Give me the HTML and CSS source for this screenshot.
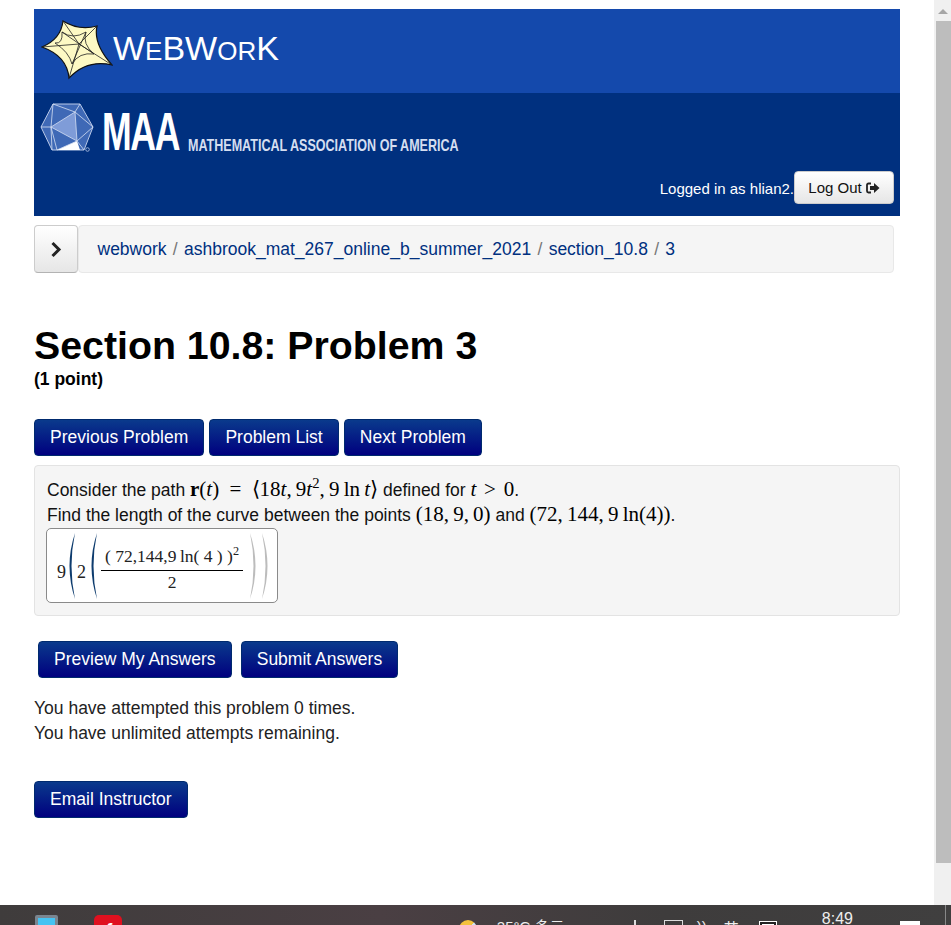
FILE: index.html
```html
<!DOCTYPE html>
<html lang="en">
<head>
    <meta charset="UTF-8">
    <title>Section 10.8: Problem 3</title>
    <link rel="stylesheet" href="styles.css">
</head>
<body>
    <div class="window">
        <div class="page">
            <!-- Banner -->
            <div class="brand-bar">
                <svg class="web-logo" width="72" height="60" viewBox="0 0 72 60">
                    <path d="M22 1 Q38 11 56 6 Q52 24 71 45 Q46 39 28 58 Q26 36 1 27 Q20 19 22 1Z" fill="#fdf9c4" stroke="#111" stroke-width="1.2"/>
                    <path d="M22 1 L38 24 L56 6 M1 27 L38 24 L71 45 M28 58 L38 24 M14 23 Q22 24 21 12 Q32 20 45 12 Q41 24 53 34 Q38 32 31 44 Q28 32 14 23Z M21 12 L53 34 M45 12 L31 44" fill="none" stroke="#222" stroke-width="0.8"/>
                </svg>
                <span class="web-title">W<small>E</small>BW<small>O</small><small>R</small>K</span>
            </div>
            <div class="maa-bar">
                <div class="maa-logo">
                    <svg width="54" height="50" viewBox="0 0 54 50">
                        <path d="M13 1 L40 1 L53 24 L44 47 L12 47 L1 24Z" fill="#3f69b6" stroke="#b9c9e8" stroke-width="1"/>
                        <path d="M11 24 L35 9 L37 38 L11 24Z" fill="#7f9cd8"/>
                        <path d="M17 47 L37 38 L40 47Z" fill="#fff"/>
                        <path d="M13 1 L35 9 L40 1 M35 9 L53 24 L37 38 L44 47 M1 24 L11 24 L13 1 M11 24 L12 47 M11 24 L37 38 L17 47 L11 24 M35 9 L11 24 M35 9 L37 38" fill="none" stroke="#d5dff3" stroke-width="0.8"/>
                        <circle cx="47.500" cy="46.500" r="1.800" fill="none" stroke="#c9d6ef" stroke-width="0.700"/>
                    </svg>
                    <span class="maa-big">MAA</span>
                    <span class="maa-name">MATHEMATICAL ASSOCIATION OF AMERICA</span>
                </div>
                <div class="login-row">
                    <span class="login-text">Logged in as hlian2.</span>
                    <a class="logout-btn">Log Out
                        <svg width="14" height="12" viewBox="0 0 14 12"><path d="M5 1.500H2.500A1.500 1.500 0 0 0 1 3V9A1.500 1.500 0 0 0 2.500 10.500H5" fill="none" stroke="#222" stroke-width="1.800"/><path d="M4 4H8V1L13.500 6L8 11V8H4Z" fill="#222"/></svg>
                    </a>
                </div>
            </div>

            <!-- Breadcrumb -->
            <div class="nav-row">
                <a class="toggle-btn">
                    <svg width="12" height="17" viewBox="0 0 12 17"><path d="M2.500 2L9 8.500L2.500 15" fill="none" stroke="#222" stroke-width="3"/></svg>
                </a>
                <div class="breadcrumb">
                    <a>webwork</a><span class="sep">/</span><a>ashbrook_mat_267_online_b_summer_2021</a><span class="sep">/</span><a>section_10.8</a><span class="sep">/</span><a>3</a>
                </div>
            </div>

            <h1>Section 10.8: Problem 3</h1>
            <div class="points">(1 point)</div>

            <div class="btn-row">
                <a class="blue-btn">Previous Problem</a>
                <a class="blue-btn">Problem List</a>
                <a class="blue-btn">Next Problem</a>
            </div>

            <!-- Problem -->
            <div class="problem">
                <div class="line">Consider the path <span class="math eq"><b>r</b>(<i>t</i>) = ⟨18<i>t</i>,&thinsp;9<i>t</i><sup>2</sup>,&thinsp;9&thinsp;ln&thinsp;<i>t</i>⟩</span> defined for <span class="math gt"><i>t</i> &gt; 0</span>.</div>
                <div class="line">Find the length of the curve between the points <span class="math">(18,&thinsp;9,&thinsp;0)</span> and <span class="math">(72,&thinsp;144,&thinsp;9&thinsp;ln(4))</span>.</div>
                <div class="answer">
                    <span class="ans-num">9</span>
                    <svg class="paren" width="9" height="66" viewBox="0 0 9 66"><path d="M8 0 Q-3 33 8 66 Q1 33 8 0Z"/></svg>
                    <span class="ans-num two">2</span>
                    <svg class="paren" width="9" height="66" viewBox="0 0 9 66"><path d="M8 0 Q-3 33 8 66 Q1 33 8 0Z"/></svg>
                    <span class="frac">
                        <span class="numer">( 72,144,9&thinsp;ln( 4 ) )<sup>2</sup></span>
                        <span class="denom">2</span>
                    </span>
                    <svg class="paren ghost" width="9" height="66" viewBox="0 0 9 66"><path d="M1 0 Q12 33 1 66 Q8 33 1 0Z"/></svg>
                    <svg class="paren ghost" width="9" height="66" viewBox="0 0 9 66"><path d="M1 0 Q12 33 1 66 Q8 33 1 0Z"/></svg>
                </div>
            </div>

            <div class="btn-row submit-row">
                <a class="blue-btn">Preview My Answers</a>
                <a class="blue-btn">Submit Answers</a>
            </div>

            <div class="attempts">
                <div>You have attempted this problem 0 times.</div>
                <div>You have unlimited attempts remaining.</div>
            </div>

            <div class="email-row">
                <a class="blue-btn">Email Instructor</a>
            </div>
        </div>

        <!-- Browser scrollbar -->
        <div class="scrollbar">
            <div class="scroll-arrow"></div>
            <div class="scroll-thumb"></div>
        </div>
    </div>

    <!-- Windows taskbar, cut off by the bottom of the picture -->
    <div class="taskbar">
        <div class="task-left">
            <span class="task-monitor"></span>
            <span class="task-flash">f</span>
        </div>
        <div class="task-right">
            <span class="task-weather"></span>
            <span class="task-text">25°C 多云</span>
            <span class="task-tick"></span>
            <span class="task-box"></span>
            <span class="task-glyph">))</span>
            <span class="task-glyph wide">艹</span>
            <span class="task-box ime"></span>
            <span class="task-clock">8:49</span>
            <span class="task-note"></span>
            <span class="task-edge"></span>
        </div>
    </div>
</body>
</html>
```

FILE: styles.css
```css
html, body {
    margin: 0;
    padding: 0;
    height: 925px;
    overflow: hidden;
    background: #fff;
    font-family: "Liberation Sans", Arial, sans-serif;
    font-size: 17.500px;
    color: #111;
}
.window {
    display: flex;
    height: 905px;
}
.page {
    width: 866px;
    margin-left: 34px;
    padding-top: 9px;
}

/* Banner */
.brand-bar {
    height: 84px;
    background: #1449ac;
    display: flex;
    align-items: flex-start;
    box-sizing: border-box;
    padding: 11px 0 0 7px;
}
.web-title {
    color: #fff;
    font-size: 34px;
    line-height: 34px;
    margin: 11px 0 0 0;
}
.web-title small {
    font-size: 26px;
}
.maa-bar {
    height: 123px;
    background: #00307f;
    display: flex;
    flex-direction: column;
    justify-content: space-between;
}
.maa-logo {
    display: flex;
    align-items: flex-end;
    padding: 10px 0 0 6px;
    color: #fff;
}
.maa-big {
    font-weight: bold;
    font-size: 54px;
    line-height: 43px;
    letter-spacing: -2px;
    margin-left: 8px;
    transform: scaleX(0.66);
    transform-origin: left;
    width: 86px;
}
.maa-name {
    font-weight: bold;
    font-size: 17px;
    line-height: 17px;
    color: #d5def0;
    transform: scaleX(0.738);
    transform-origin: left;
    white-space: nowrap;
    width: 271px;
    margin-bottom: -1px;
}
.login-row {
    display: flex;
    justify-content: flex-end;
    align-items: center;
    padding: 0 6px 12px 0;
}
.login-text {
    color: #fff;
    font-size: 15px;
    margin-top: 1px;
}
.logout-btn {
    display: flex;
    align-items: center;
    gap: 4px;
    width: 100px;
    height: 33px;
    box-sizing: border-box;
    justify-content: center;
    background: linear-gradient(#fff, #e6e6e6);
    border: 1px solid #ccc;
    border-radius: 4px;
    font-size: 15px;
    color: #111;
}

/* Breadcrumb */
.nav-row {
    display: flex;
    margin-top: 9px;
    width: 860px;
}
.toggle-btn {
    width: 44px;
    height: 48px;
    box-sizing: border-box;
    display: flex;
    align-items: center;
    justify-content: center;
    background: linear-gradient(#fff, #e6e6e6);
    border: 1px solid #ccc;
    border-bottom-color: #b3b3b3;
    border-radius: 4px;
}
.breadcrumb {
    flex: 1;
    height: 48px;
    box-sizing: border-box;
    padding-left: 18.500px;
    display: flex;
    align-items: center;
    background: #f5f5f5;
    border: 1px solid #e8e8e8;
    border-radius: 4px;
    color: #00307f;
}
.breadcrumb .sep {
    color: #777;
    margin: 0 6.250px;
}

h1 {
    margin: 49px 0 0;
    font-size: 39.300px;
    line-height: 46px;
    color: #000;
}
.points {
    font-weight: bold;
    font-size: 17.500px;
    line-height: 18px;
    color: #000;
    margin-top: 2px;
}

/* Buttons */
.btn-row {
    display: flex;
    gap: 5px;
    margin-top: 31px;
}
.blue-btn {
    display: block;
    height: 37px;
    box-sizing: border-box;
    padding: 0 15.100px;
    line-height: 34px;
    background: linear-gradient(#0a3a8c, #00007f);
    border: 1px solid #002a6e;
    border-radius: 4px;
    color: #fff;
    font-size: 17.500px;
    white-space: nowrap;
}

/* Problem */
.problem {
    margin-top: 9px;
    height: 151px;
    box-sizing: border-box;
    padding: 11px 12px 0;
    background: #f5f5f5;
    border: 1px solid #e3e3e3;
    border-radius: 4px;
}
.line {
    height: 25px;
    line-height: 25px;
    white-space: nowrap;
}
.math {
    font-family: "Liberation Serif", "Times New Roman", serif;
    font-size: 21px;
    color: #000;
}
.math.eq {
    word-spacing: 5px;
}
.math.gt {
    word-spacing: 2.500px;
}
sup {
    font-size: 0.7em;
    line-height: 0;
}
.answer {
    display: inline-flex;
    align-items: center;
    width: 232px;
    height: 75px;
    box-sizing: border-box;
    margin: 1px 0 0 -1px;
    padding-left: 10px;
    background: #fff;
    border: 1px solid #8a8a8a;
    border-radius: 5px;
    font-family: "Liberation Serif", "Times New Roman", serif;
    font-size: 18px;
    color: #222;
}
.ans-num {
    padding-top: 14px;
}
.ans-num.two {
    margin-right: 2px;
}
.paren {
    fill: #0e3c6e;
    flex: none;
    margin: 0 1px;
}
.paren.ghost {
    fill: #bcbcbc;
    margin: 0 3px 0 0;
}
.frac {
    display: flex;
    flex-direction: column;
    align-items: center;
    width: 142px;
    margin: 4px 6px 0 2px;
    font-size: 17.500px;
}
.numer {
    display: block;
    width: 100%;
    text-align: center;
    white-space: nowrap;
    border-bottom: 1px solid #000;
    line-height: 28px;
}
.denom {
    line-height: 22px;
}

.submit-row {
    margin: 25px 0 0 4px;
    gap: 9px;
}
.attempts {
    margin-top: 18px;
    line-height: 25px;
    color: #222;
}
.email-row {
    margin-top: 35px;
    display: flex;
}

/* Scrollbar */
.scrollbar {
    width: 17px;
    margin-left: auto;
    background: #f0f0f0;
    display: flex;
    flex-direction: column;
    align-items: flex-end;
}
.scroll-arrow {
    width: 0;
    height: 0;
    margin: 9px 3px 7px 0;
    border-left: 5px solid transparent;
    border-right: 5px solid transparent;
    border-bottom: 5px solid #a6a6a6;
}
.scroll-thumb {
    width: 15px;
    height: 842px;
    background: #bdbdbd;
}

/* Taskbar */
.taskbar {
    height: 20px;
    background: linear-gradient(90deg, #3f3c3c, #4a3f43 40%, #3e3c3c 70%, #403f3f);
    display: flex;
    justify-content: space-between;
    overflow: hidden;
    color: #eee;
    font-size: 15px;
}
.task-left {
    display: flex;
    gap: 36px;
    padding: 10px 0 0 35px;
}
.task-monitor {
    width: 23px;
    height: 24px;
    background: #45c3f2;
    border: 3px solid #7a8590;
    box-sizing: border-box;
    border-radius: 2px;
}
.task-flash {
    width: 28px;
    height: 24px;
    background: #e0101f;
    border-radius: 5px;
    color: #fff;
    font-weight: bold;
    font-style: italic;
    font-size: 18px;
    text-align: center;
    line-height: 30px;
}
.task-right {
    display: flex;
    align-items: flex-start;
}
.task-weather {
    width: 18px;
    height: 18px;
    margin-top: 15px;
    border-radius: 50%;
    background: linear-gradient(135deg, #f3c23c 50%, #cfe3f2 50%);
}
.task-text {
    margin: 14px 0 0 20px;
    white-space: nowrap;
    width: 137px;
    line-height: 15px;
    font-family: "Liberation Sans", "Noto Sans CJK SC", sans-serif;
}
.task-tick {
    width: 2px;
    height: 5px;
    margin: 15px 28px 0 0;
    background: #ddd;
}
.task-box {
    width: 19px;
    height: 14px;
    margin-top: 15px;
    border: 1px solid #ddd;
    box-sizing: border-box;
}
.task-glyph {
    width: 17px;
    margin: 14px 0 0 14px;
    line-height: 15px;
    white-space: nowrap;
}
.task-glyph.wide {
    width: 18px;
    margin-left: 10px;
    font-family: "Noto Sans CJK SC", sans-serif;
}
.task-box.ime {
    width: 18px;
    margin: 16px 0 0 17px;
    background: #fff;
    border-color: #fff;
    box-shadow: inset 0 0 0 2px #222;
}
.task-clock {
    margin: 5px 0 0 45px;
    font-size: 16px;
    line-height: 18px;
}
.task-note {
    width: 20px;
    height: 10px;
    margin: 16px 25px 0 47px;
    background: #fff;
}
.task-edge {
    width: 1px;
    height: 20px;
    margin-right: 5px;
    background: #888;
}
```
